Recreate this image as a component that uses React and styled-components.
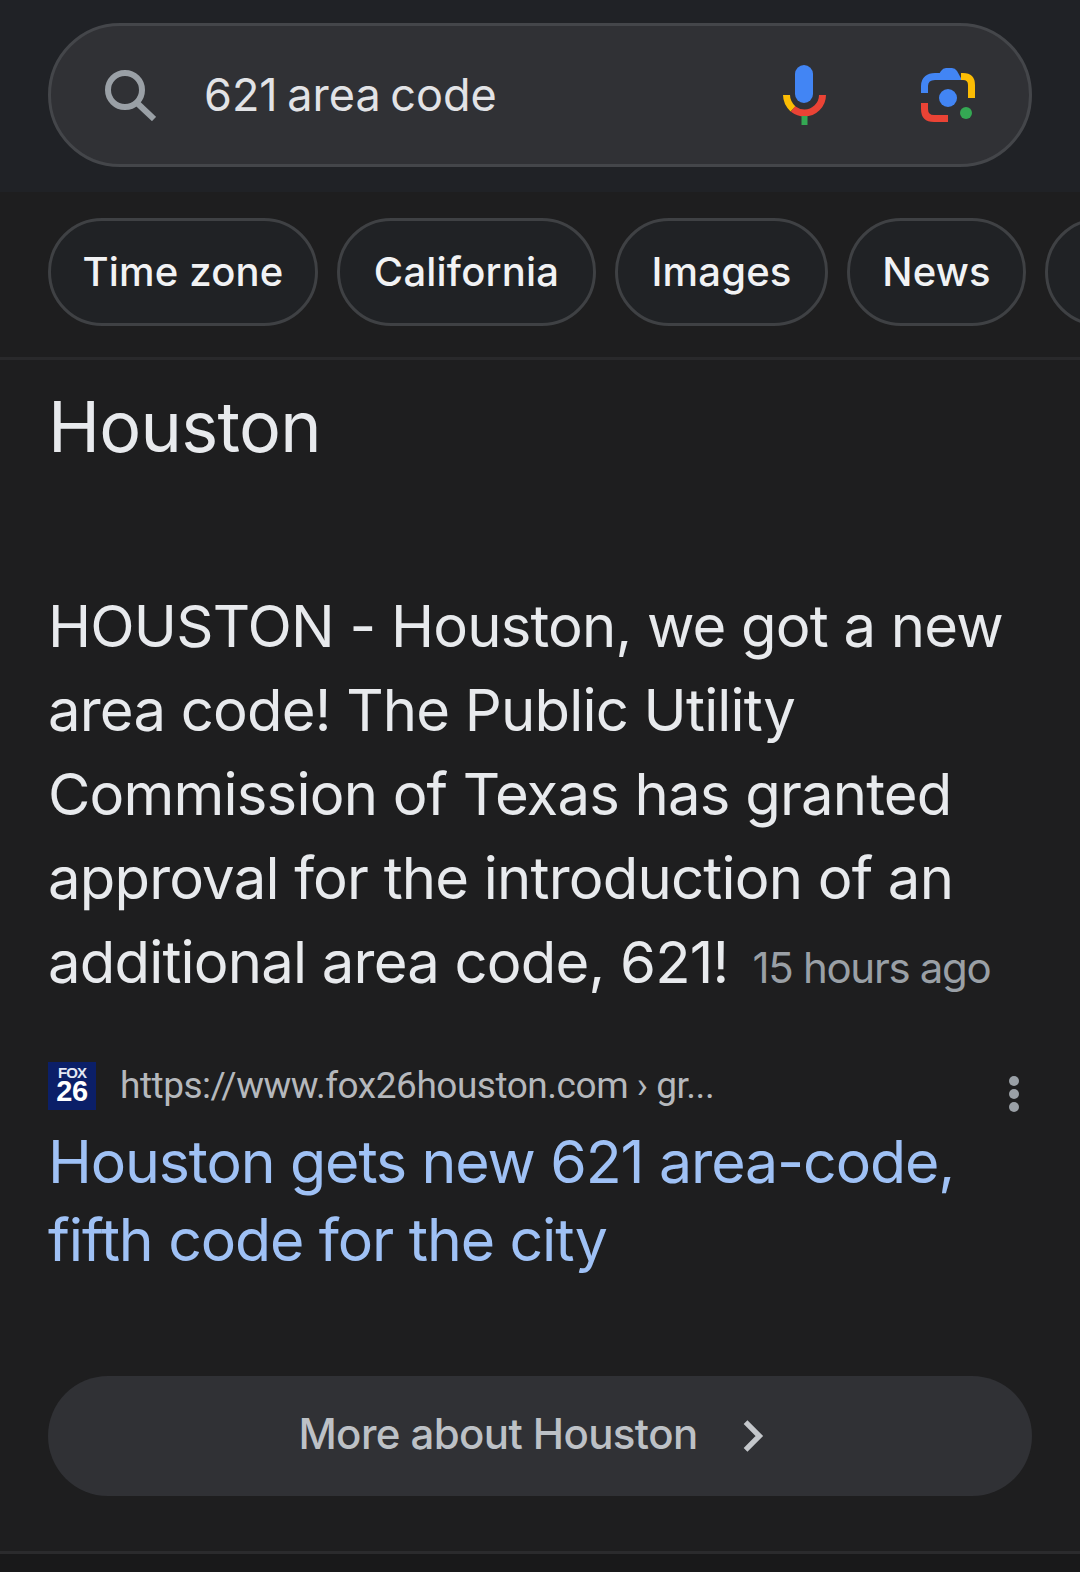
import React from "react";
import styled, { createGlobalStyle } from "styled-components";

const Global = createGlobalStyle`
  html, body { margin: 0; padding: 0; background: #1d1d1e; }
  #root { width: 1080px; height: 1572px; overflow: hidden; }
`;
const Page = styled.div`
  width: 1080px; height: 1572px; display: flex; flex-direction: column;
  background: #1e1e1f; color: #e8eaed; font-family: Inter, "Noto Sans", sans-serif; overflow: hidden;
`;
const Header = styled.header`
  height: 192px; flex: none; box-sizing: border-box; padding: 23px 48px 0; background: #202226;
`;
const SearchBar = styled.div`
  height: 144px; box-sizing: border-box; border: 3px solid #44464a; border-radius: 72px; background: #303135;
  display: flex; align-items: center; padding: 0 54px 0 53px;
`;
const Query = styled.span`
  flex: 1; margin: 0 0 2px 48px; font-size: 45px; letter-spacing: 0; word-spacing: -3px; color: #e2e3e6; line-height: 1;
`;
const Mic = styled.svg`width: 43px; height: 60px; margin-right: 95px; flex: none;`;
const Lens = styled.svg`width: 54px; height: 54px; flex: none;`;
const ChipRow = styled.nav`
  height: 168px; flex: none; box-sizing: border-box; padding: 26px 0 0 48px; display: flex; gap: 19px; align-items: flex-start;
  border-bottom: 3px solid #29292b; overflow: hidden;
`;
const Chip = styled.div`
  height: 108px; flex: none; box-sizing: border-box; width: ${p => p.$w}px; border: 3px solid #3f4144; border-radius: 54px;
  background: #202225; color: #f1f2f4; font-size: 40px; font-weight: 500; letter-spacing: 0.2px; padding-bottom: 2px;
  display: flex; align-items: center; justify-content: center;
`;
const Content = styled.main`
  padding: 0 48px; flex: 1; display: flex; flex-direction: column;
`;
const Title = styled.h2`
  margin: 22px 0 0; font-weight: 400; font-size: 70px; line-height: 90px; letter-spacing: -0.7px; color: #e8eaed;
`;
const Body = styled.p`
  margin: 112px 0 0; font-size: 58px; line-height: 84px; letter-spacing: -0.8px; color: #e8eaed; white-space: nowrap;
`;
const Ago = styled.span`
  font-size: 42px; letter-spacing: -1.3px; color: #9aa0a6; margin-left: 24px;
`;
const SourceRow = styled.div`
  margin-top: 52px; height: 48px; display: flex; align-items: center; position: relative;
`;
const Favicon = styled.div`
  width: 48px; height: 48px; flex: none; background: #0b1f68; color: #fff; display: flex; flex-direction: column;
  align-items: center; justify-content: center; font-family: "Liberation Sans", sans-serif; font-weight: 700; line-height: 1;
  padding-bottom: 3px; box-sizing: border-box;
`;
const FavTop = styled.span`font-size: 15px; height: 13px; line-height: 13px; letter-spacing: -1px; color: #e4e8f4;`;
const FavNum = styled.span`font-size: 29px; height: 24px; line-height: 24px; letter-spacing: -0.3px;`;
const Url = styled.span`
  margin: 0 0 1px 24px; font-family: Roboto, sans-serif; font-size: 37px; color: #b5b8bc; letter-spacing: -0.47px;
`;
const Kebab = styled.svg`
  position: absolute; right: 12px; top: 14px; width: 12px; height: 36px;
`;
const Headline = styled.h3`
  margin: 13px 0 0; font-weight: 400; font-size: 59px; line-height: 78px; letter-spacing: -1.1px; color: #9fc1f5; white-space: nowrap;
`;
const MoreButton = styled.div`
  margin-top: 97px; height: 120px; border-radius: 60px; background: #303135; display: flex; align-items: center; justify-content: center;
  gap: 44px; color: #bdc1c6; font-size: 42px; font-weight: 500; letter-spacing: -0.6px; padding-right: 18px;
`;
const MoreLabel = styled.span`margin-bottom: 5px;`;
const Chevron = styled.svg`width: 22px; height: 34px;`;
const FootLine = styled.div`
  height: 3px; margin-top: 55px; margin-left: -48px; margin-right: -48px; background: #2b2b2d;
`;
const Foot = styled.div`flex: 1; margin: 0 -48px; background: #19191a;`;

export default function App() {
  return (
    <Page>
      <Global />
      <Header>
        <SearchBar>
          <svg width="52" height="52" viewBox="0 0 52 52" fill="none">
            <circle cx="21" cy="21" r="17" stroke="#9aa0a6" strokeWidth="6" />
            <path d="M32 33L50 50" stroke="#9aa0a6" strokeWidth="6" />
          </svg>
          <Query>621 area code</Query>
          <Mic viewBox="0 0 43 60" fill="none">
            <rect x="12" y="0" width="18" height="38" rx="9" fill="#4285f4" />
            <path d="M3.5 30C3.5 35 6 40 10 44" stroke="#fbbc04" strokeWidth="7" />
            <path d="M10 44C14 47 18 48 21.5 48C31 48 39.5 40 39.5 30" stroke="#ea4335" strokeWidth="7" />
            <rect x="18.5" y="51" width="6" height="9" fill="#34a853" />
          </Mic>
          <Lens viewBox="0 0 54 54" fill="none">
            <path d="M3.5 25V18C3.5 11 8 8.5 14 8.5H20" stroke="#4285f4" strokeWidth="7" />
            <path d="M14 12L20 3Q22 0 25 0H31Q34 0 36 3L41 12Z" fill="#4285f4" />
            <path d="M40 8.5H42Q50.5 8.5 50.5 17V30" stroke="#fbbc04" strokeWidth="7" />
            <path d="M3.5 35V41Q3.5 50.5 13 50.5H27" stroke="#ea4335" strokeWidth="7" />
            <circle cx="27" cy="30" r="9" fill="#4285f4" />
            <circle cx="45" cy="45" r="6" fill="#34a853" />
          </Lens>
        </SearchBar>
      </Header>
      <ChipRow>
        <Chip $w={270}>Time zone</Chip>
        <Chip $w={259}>California</Chip>
        <Chip $w={213}>Images</Chip>
        <Chip $w={179}>News</Chip>
        <Chip $w={200} />
      </ChipRow>
      <Content>
        <Title>Houston</Title>
        <Body>
          HOUSTON - Houston, we got a new<br />
          area code! The Public Utility<br />
          Commission of Texas has granted<br />
          approval for the introduction of an<br />
          additional area code, 621!<Ago>15 hours ago</Ago>
        </Body>
        <SourceRow>
          <Favicon><FavTop>FOX</FavTop><FavNum>26</FavNum></Favicon>
          <Url>https://www.fox26houston.com › gr...</Url>
          <Kebab viewBox="0 0 12 36" fill="#9aa0a6">
            <circle cx="6" cy="5" r="5" /><circle cx="6" cy="18" r="5" /><circle cx="6" cy="31" r="5" />
          </Kebab>
        </SourceRow>
        <Headline>Houston gets new 621 area-code,<br />fifth code for the city</Headline>
        <MoreButton>
          <MoreLabel>More about Houston</MoreLabel>
          <Chevron viewBox="0 0 20 32" fill="none"><path d="M3 3L16 16L3 29" stroke="#c4c7cb" strokeWidth="5" /></Chevron>
        </MoreButton>
        <FootLine />
        <Foot />
      </Content>
    </Page>
  );
}
